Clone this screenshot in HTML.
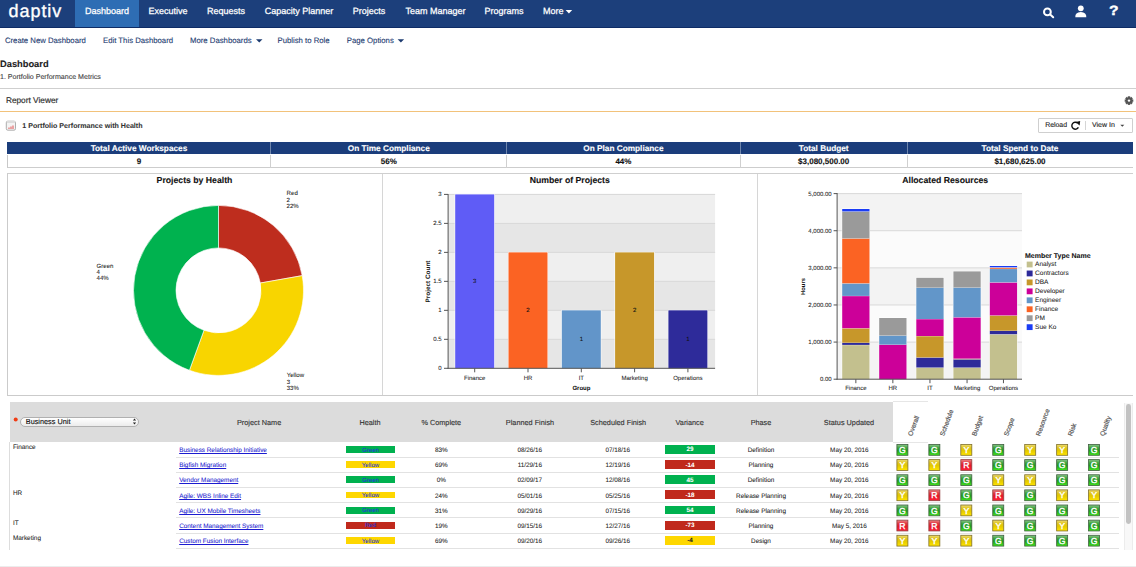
<!DOCTYPE html>
<html><head><meta charset="utf-8"><title>Dashboard</title>
<style>
html,body{margin:0;padding:0;width:1136px;height:567px;overflow:hidden;background:#fff;}
body{position:relative;font-family:"Liberation Sans", sans-serif;}
.t{position:absolute;white-space:nowrap;font-family:"Liberation Sans", sans-serif;text-rendering:geometricPrecision;}
svg text{text-rendering:geometricPrecision;}
svg.full{position:absolute;left:0;top:0;}
</style></head><body>

<div style="position:absolute;left:0.00px;top:0.00px;width:1136.00px;height:27.00px;background:#1c3f7b;"></div>
<div style="position:absolute;left:0.00px;top:27.00px;width:1136.00px;height:1.00px;background:#0e2c66;"></div>
<div style="position:absolute;left:75.00px;top:0.00px;width:64.00px;height:26.60px;background:#2e6db4;"></div>
<div style="position:absolute;left:0.00px;top:88.00px;width:1136.00px;height:1.00px;background:#cfcfcf;"></div>
<div style="position:absolute;left:0.00px;top:111.00px;width:1136.00px;height:1.00px;background:#f2c27a;"></div>
<div style="position:absolute;left:1038.20px;top:118.00px;width:94.50px;height:14.60px;background:#fff;border:1px solid #cfcfcf;box-sizing:border-box;border-radius:1px;"></div>
<div style="position:absolute;left:1085.30px;top:121.00px;width:0.80px;height:9.00px;background:#d5d5d5;"></div>
<div style="position:absolute;left:7.00px;top:141.60px;width:1125.70px;height:12.90px;background:#1b3d7b;"></div>
<div style="position:absolute;left:7.00px;top:154.50px;width:1126.00px;height:13.40px;background:#fff;border-left:1px solid #c8c8c8;border-bottom:1.4px solid #cdcdcd;box-sizing:border-box;"></div>
<div style="position:absolute;left:270.40px;top:141.60px;width:1.00px;height:12.90px;background:#6f86ad;"></div>
<div style="position:absolute;left:270.40px;top:154.50px;width:1.00px;height:13.00px;background:#d0d0d0;"></div>
<div style="position:absolute;left:506.20px;top:141.60px;width:1.00px;height:12.90px;background:#6f86ad;"></div>
<div style="position:absolute;left:506.20px;top:154.50px;width:1.00px;height:13.00px;background:#d0d0d0;"></div>
<div style="position:absolute;left:739.60px;top:141.60px;width:1.00px;height:12.90px;background:#6f86ad;"></div>
<div style="position:absolute;left:739.60px;top:154.50px;width:1.00px;height:13.00px;background:#d0d0d0;"></div>
<div style="position:absolute;left:906.80px;top:141.60px;width:1.00px;height:12.90px;background:#6f86ad;"></div>
<div style="position:absolute;left:906.80px;top:154.50px;width:1.00px;height:13.00px;background:#d0d0d0;"></div>
<div style="position:absolute;left:7.00px;top:173.20px;width:1126.00px;height:222.40px;background:#fff;border-left:1px solid #cbcbcb;border-bottom:1px solid #cbcbcb;border-top:1.6px solid #cfcfcf;box-sizing:border-box;"></div>
<div style="position:absolute;left:382.20px;top:174.00px;width:1.00px;height:221.00px;background:#d6d6d6;"></div>
<div style="position:absolute;left:757.30px;top:174.00px;width:1.00px;height:221.00px;background:#d6d6d6;"></div>
<div style="position:absolute;left:9.70px;top:402.00px;width:883.30px;height:39.60px;background:#dcdcdc;"></div>
<div style="position:absolute;left:893.00px;top:401.30px;width:35.00px;height:0.80px;background:#e6e6e6;"></div>
<div style="position:absolute;left:893.00px;top:441.90px;width:35.00px;height:0.80px;background:#e6e6e6;"></div>
<div style="position:absolute;left:9.20px;top:441.60px;width:0.80px;height:108.60px;background:#dddddd;"></div>
<div style="position:absolute;left:20.20px;top:416.80px;width:119.20px;height:9.80px;background:linear-gradient(#ffffff,#ececec);border:0.8px solid #b0b0b0;box-sizing:border-box;border-radius:5px;"></div>
<div style="position:absolute;left:1123.50px;top:403.00px;width:9.80px;height:146.70px;background:#f8f8f8;border-left:0.8px solid #ececec;border-right:0.8px solid #ececec;box-sizing:border-box;"></div>
<div style="position:absolute;left:1126.30px;top:403.70px;width:4.80px;height:119.90px;background:#c2c2c2;border-radius:2.4px;"></div>
<div style="position:absolute;left:0.00px;top:566.00px;width:1136.00px;height:1.00px;background:#ececec;"></div>
<div style="position:absolute;left:345.80px;top:446.15px;width:49.40px;height:6.90px;background:#00b14f;"></div>
<div style="position:absolute;left:665.00px;top:445.00px;width:50.00px;height:8.90px;background:#00b14f;"></div>
<div style="position:absolute;left:176.00px;top:456.90px;width:943.00px;height:0.80px;background:#e2e2e2;"></div>
<div style="position:absolute;left:345.80px;top:461.28px;width:49.40px;height:6.90px;background:#fed700;"></div>
<div style="position:absolute;left:665.00px;top:460.13px;width:50.00px;height:8.90px;background:#c0291c;"></div>
<div style="position:absolute;left:176.00px;top:472.03px;width:943.00px;height:0.80px;background:#e2e2e2;"></div>
<div style="position:absolute;left:345.80px;top:476.41px;width:49.40px;height:6.90px;background:#00b14f;"></div>
<div style="position:absolute;left:665.00px;top:475.26px;width:50.00px;height:8.90px;background:#00b14f;"></div>
<div style="position:absolute;left:176.00px;top:487.16px;width:943.00px;height:0.80px;background:#e2e2e2;"></div>
<div style="position:absolute;left:345.80px;top:491.54px;width:49.40px;height:6.90px;background:#fed700;"></div>
<div style="position:absolute;left:665.00px;top:490.39px;width:50.00px;height:8.90px;background:#c0291c;"></div>
<div style="position:absolute;left:176.00px;top:502.29px;width:943.00px;height:0.80px;background:#e2e2e2;"></div>
<div style="position:absolute;left:345.80px;top:506.67px;width:49.40px;height:6.90px;background:#00b14f;"></div>
<div style="position:absolute;left:665.00px;top:505.52px;width:50.00px;height:8.90px;background:#00b14f;"></div>
<div style="position:absolute;left:176.00px;top:517.42px;width:943.00px;height:0.80px;background:#e2e2e2;"></div>
<div style="position:absolute;left:345.80px;top:521.80px;width:49.40px;height:6.90px;background:#c0291c;"></div>
<div style="position:absolute;left:665.00px;top:520.65px;width:50.00px;height:8.90px;background:#c0291c;"></div>
<div style="position:absolute;left:176.00px;top:532.55px;width:943.00px;height:0.80px;background:#e2e2e2;"></div>
<div style="position:absolute;left:345.80px;top:536.93px;width:49.40px;height:6.90px;background:#fed700;"></div>
<div style="position:absolute;left:665.00px;top:535.78px;width:50.00px;height:8.90px;background:#fed700;"></div>
<div style="position:absolute;left:176.00px;top:547.68px;width:943.00px;height:0.80px;background:#e2e2e2;"></div>
<svg class="full" width="1136" height="567" viewBox="0 0 1136 567"><defs><linearGradient id="gG" x1="0" y1="0" x2="0" y2="1"><stop offset="0" stop-color="#8cc88c"/><stop offset="0.3" stop-color="#3fa43f"/><stop offset="0.55" stop-color="#1f9c1f"/><stop offset="1" stop-color="#45e31f"/></linearGradient><linearGradient id="gY" x1="0" y1="0" x2="0" y2="1"><stop offset="0" stop-color="#eedd77"/><stop offset="0.3" stop-color="#dfc520"/><stop offset="0.55" stop-color="#e2c800"/><stop offset="1" stop-color="#ffe400"/></linearGradient><linearGradient id="gR" x1="0" y1="0" x2="0" y2="1"><stop offset="0" stop-color="#ee8888"/><stop offset="0.3" stop-color="#e03a44"/><stop offset="0.55" stop-color="#e41a2a"/><stop offset="1" stop-color="#ff2036"/></linearGradient></defs><path d="M565.6 10.0 L572.2 10.0 L568.9 13.4 Z" fill="#fff"/>
<circle cx="1047.4" cy="11.9" r="3.4" fill="none" stroke="#fff" stroke-width="2"/><path d="M1050.2 14.6 L1053.2 17.3" stroke="#fff" stroke-width="2" stroke-linecap="round"/>
<circle cx="1080.8" cy="8.3" r="2.9" fill="#fff"/><path d="M1075.3 17.2 Q1075 12.3 1080.8 12 Q1086.6 12.3 1086.3 17.2 Z" fill="#fff"/>
<path d="M256 39.3 L262.5 39.3 L259.25 42.5 Z" fill="#1d3b70"/>
<path d="M397.6 39.3 L404.1 39.3 L400.85 42.5 Z" fill="#1d3b70"/>
<rect x="1127.80" y="96.30" width="2.4" height="2.4" fill="#555" transform="rotate(0 1129 100.6)"/><rect x="1127.80" y="96.30" width="2.4" height="2.4" fill="#555" transform="rotate(45 1129 100.6)"/><rect x="1127.80" y="96.30" width="2.4" height="2.4" fill="#555" transform="rotate(90 1129 100.6)"/><rect x="1127.80" y="96.30" width="2.4" height="2.4" fill="#555" transform="rotate(135 1129 100.6)"/><rect x="1127.80" y="96.30" width="2.4" height="2.4" fill="#555" transform="rotate(180 1129 100.6)"/><rect x="1127.80" y="96.30" width="2.4" height="2.4" fill="#555" transform="rotate(225 1129 100.6)"/><rect x="1127.80" y="96.30" width="2.4" height="2.4" fill="#555" transform="rotate(270 1129 100.6)"/><rect x="1127.80" y="96.30" width="2.4" height="2.4" fill="#555" transform="rotate(315 1129 100.6)"/><circle cx="1129" cy="100.6" r="3.1" fill="#555"/><circle cx="1129" cy="100.6" r="1.2" fill="#fff"/>
<rect x="6.3" y="121.2" width="9.2" height="9" rx="1.5" fill="#f4f4f4" stroke="#9a9a9a" stroke-width="0.8"/><rect x="7" y="121" width="8" height="2" fill="#ddd"/><path d="M9 129 L9 127.5 M11 129 L11 126.5 M13 129 L13 125.5" stroke="#e05050" stroke-width="1"/>
<path d="M1077.6 123.0 A3.5 3.5 0 1 0 1078.4 127.4" fill="none" stroke="#111" stroke-width="1.4"/><path d="M1075.6 121.9 L1080.2 121.0 L1079.6 125.4 Z" fill="#111"/>
<path d="M1120.3 124.8 L1124.3 124.8 L1122.3 126.8 Z" fill="#444"/>
<path d="M218.50 205.40 A85 85 0 0 1 302.21 275.64 L260.35 283.02 A42.5 42.5 0 0 0 218.50 247.90 Z" fill="#be2d1e" stroke="#fff" stroke-width="0.6"/>
<path d="M302.21 275.64 A85 85 0 0 1 189.43 370.27 L203.96 330.34 A42.5 42.5 0 0 0 260.35 283.02 Z" fill="#f8d500" stroke="#fff" stroke-width="0.6"/>
<path d="M189.43 370.27 A85 85 0 0 1 218.50 205.40 L218.50 247.90 A42.5 42.5 0 0 0 203.96 330.34 Z" fill="#00b24f" stroke="#fff" stroke-width="0.6"/>
<rect x="448.1" y="339.32" width="267.00" height="28.98" fill="#e6e6e6"/>
<rect x="448.1" y="310.33" width="267.00" height="28.98" fill="#efefef"/>
<rect x="448.1" y="281.35" width="267.00" height="28.98" fill="#e6e6e6"/>
<rect x="448.1" y="252.37" width="267.00" height="28.98" fill="#efefef"/>
<rect x="448.1" y="223.38" width="267.00" height="28.98" fill="#e6e6e6"/>
<rect x="448.1" y="194.40" width="267.00" height="28.98" fill="#efefef"/>
<rect x="448.1" y="338.82" width="267.00" height="1" fill="#d8d8d8"/>
<rect x="448.1" y="309.83" width="267.00" height="1" fill="#d8d8d8"/>
<rect x="448.1" y="280.85" width="267.00" height="1" fill="#d8d8d8"/>
<rect x="448.1" y="251.87" width="267.00" height="1" fill="#d8d8d8"/>
<rect x="448.1" y="222.88" width="267.00" height="1" fill="#d8d8d8"/>
<rect x="448.1" y="193.90" width="267.00" height="1" fill="#d8d8d8"/>
<rect x="454.70" y="193.90" width="40" height="174.40" fill="#fff"/>
<rect x="455.20" y="194.40" width="39" height="173.90" fill="#5f5cf6"/>
<rect x="474.20" y="368.3" width="1" height="4" fill="#555"/>
<rect x="508.00" y="251.87" width="40" height="116.43" fill="#fff"/>
<rect x="508.50" y="252.37" width="39" height="115.93" fill="#fb6323"/>
<rect x="527.50" y="368.3" width="1" height="4" fill="#555"/>
<rect x="561.30" y="309.83" width="40" height="58.47" fill="#fff"/>
<rect x="561.80" y="310.33" width="39" height="57.97" fill="#6295c9"/>
<rect x="580.80" y="368.3" width="1" height="4" fill="#555"/>
<rect x="614.60" y="251.87" width="40" height="116.43" fill="#fff"/>
<rect x="615.10" y="252.37" width="39" height="115.93" fill="#c7972a"/>
<rect x="634.10" y="368.3" width="1" height="4" fill="#555"/>
<rect x="667.90" y="309.83" width="40" height="58.47" fill="#fff"/>
<rect x="668.40" y="310.33" width="39" height="57.97" fill="#2e2b9a"/>
<rect x="687.40" y="368.3" width="1" height="4" fill="#555"/>
<rect x="447.6" y="194" width="1" height="174.80" fill="#555"/>
<rect x="447.6" y="367.80" width="267.50" height="1" fill="#555"/>
<rect x="444" y="367.80" width="4" height="1" fill="#555"/>
<rect x="444" y="338.82" width="4" height="1" fill="#555"/>
<rect x="444" y="309.83" width="4" height="1" fill="#555"/>
<rect x="444" y="280.85" width="4" height="1" fill="#555"/>
<rect x="444" y="251.87" width="4" height="1" fill="#555"/>
<rect x="444" y="222.88" width="4" height="1" fill="#555"/>
<rect x="444" y="193.90" width="4" height="1" fill="#555"/>
<rect x="837.1" y="342.08" width="184.90" height="37.12" fill="#f4f4f4"/>
<rect x="837.1" y="304.96" width="184.90" height="37.12" fill="#fbfbfb"/>
<rect x="837.1" y="267.84" width="184.90" height="37.12" fill="#f3f3f3"/>
<rect x="837.1" y="230.72" width="184.90" height="37.12" fill="#fbfbfb"/>
<rect x="837.1" y="193.60" width="184.90" height="37.12" fill="#f3f3f3"/>
<rect x="837.1" y="341.58" width="184.90" height="1" fill="#d9d9d9"/>
<rect x="837.1" y="304.46" width="184.90" height="1" fill="#d9d9d9"/>
<rect x="837.1" y="267.34" width="184.90" height="1" fill="#d9d9d9"/>
<rect x="837.1" y="230.22" width="184.90" height="1" fill="#d9d9d9"/>
<rect x="837.1" y="193.10" width="184.90" height="1" fill="#d9d9d9"/>
<rect x="841.70" y="208.50" width="28.3" height="170.70" fill="#fff"/>
<rect x="842.20" y="344.90" width="27.3" height="34.30" fill="#c3c08e"/>
<rect x="842.20" y="344.60" width="27.3" height="0.6" fill="#fff" fill-opacity="0.8"/>
<rect x="842.20" y="342.70" width="27.3" height="2.20" fill="#2d2a99"/>
<rect x="842.20" y="342.40" width="27.3" height="0.6" fill="#fff" fill-opacity="0.8"/>
<rect x="842.20" y="328.20" width="27.3" height="14.50" fill="#c7972a"/>
<rect x="842.20" y="327.90" width="27.3" height="0.6" fill="#fff" fill-opacity="0.8"/>
<rect x="842.20" y="295.90" width="27.3" height="32.30" fill="#cc0099"/>
<rect x="842.20" y="295.60" width="27.3" height="0.6" fill="#fff" fill-opacity="0.8"/>
<rect x="842.20" y="283.30" width="27.3" height="12.60" fill="#6296c9"/>
<rect x="842.20" y="283.00" width="27.3" height="0.6" fill="#fff" fill-opacity="0.8"/>
<rect x="842.20" y="238.40" width="27.3" height="44.90" fill="#fb6323"/>
<rect x="842.20" y="238.10" width="27.3" height="0.6" fill="#fff" fill-opacity="0.8"/>
<rect x="842.20" y="211.40" width="27.3" height="27.00" fill="#9a9a9a"/>
<rect x="842.20" y="211.10" width="27.3" height="0.6" fill="#fff" fill-opacity="0.8"/>
<rect x="842.20" y="209.00" width="27.3" height="2.40" fill="#1a3cf5"/>
<rect x="855.35" y="379.2" width="1" height="4" fill="#555"/>
<rect x="878.70" y="317.50" width="28.3" height="61.70" fill="#fff"/>
<rect x="879.20" y="344.60" width="27.3" height="34.60" fill="#cc0099"/>
<rect x="879.20" y="344.30" width="27.3" height="0.6" fill="#fff" fill-opacity="0.8"/>
<rect x="879.20" y="335.50" width="27.3" height="9.10" fill="#6296c9"/>
<rect x="879.20" y="335.20" width="27.3" height="0.6" fill="#fff" fill-opacity="0.8"/>
<rect x="879.20" y="318.00" width="27.3" height="17.50" fill="#9a9a9a"/>
<rect x="892.35" y="379.2" width="1" height="4" fill="#555"/>
<rect x="915.80" y="277.30" width="28.3" height="101.90" fill="#fff"/>
<rect x="916.30" y="367.50" width="27.3" height="11.70" fill="#c3c08e"/>
<rect x="916.30" y="367.20" width="27.3" height="0.6" fill="#fff" fill-opacity="0.8"/>
<rect x="916.30" y="357.40" width="27.3" height="10.10" fill="#2d2a99"/>
<rect x="916.30" y="357.10" width="27.3" height="0.6" fill="#fff" fill-opacity="0.8"/>
<rect x="916.30" y="336.00" width="27.3" height="21.40" fill="#c7972a"/>
<rect x="916.30" y="335.70" width="27.3" height="0.6" fill="#fff" fill-opacity="0.8"/>
<rect x="916.30" y="319.00" width="27.3" height="17.00" fill="#cc0099"/>
<rect x="916.30" y="318.70" width="27.3" height="0.6" fill="#fff" fill-opacity="0.8"/>
<rect x="916.30" y="287.60" width="27.3" height="31.40" fill="#6296c9"/>
<rect x="916.30" y="287.30" width="27.3" height="0.6" fill="#fff" fill-opacity="0.8"/>
<rect x="916.30" y="277.80" width="27.3" height="9.80" fill="#9a9a9a"/>
<rect x="929.45" y="379.2" width="1" height="4" fill="#555"/>
<rect x="952.90" y="270.90" width="28.3" height="108.30" fill="#fff"/>
<rect x="953.40" y="367.50" width="27.3" height="11.70" fill="#c3c08e"/>
<rect x="953.40" y="367.20" width="27.3" height="0.6" fill="#fff" fill-opacity="0.8"/>
<rect x="953.40" y="359.20" width="27.3" height="8.30" fill="#2d2a99"/>
<rect x="953.40" y="358.90" width="27.3" height="0.6" fill="#fff" fill-opacity="0.8"/>
<rect x="953.40" y="358.60" width="27.3" height="0.60" fill="#c7972a"/>
<rect x="953.40" y="358.30" width="27.3" height="0.6" fill="#fff" fill-opacity="0.8"/>
<rect x="953.40" y="317.20" width="27.3" height="41.40" fill="#cc0099"/>
<rect x="953.40" y="316.90" width="27.3" height="0.6" fill="#fff" fill-opacity="0.8"/>
<rect x="953.40" y="287.50" width="27.3" height="29.70" fill="#6296c9"/>
<rect x="953.40" y="287.20" width="27.3" height="0.6" fill="#fff" fill-opacity="0.8"/>
<rect x="953.40" y="271.40" width="27.3" height="16.10" fill="#9a9a9a"/>
<rect x="966.55" y="379.2" width="1" height="4" fill="#555"/>
<rect x="989.30" y="265.50" width="28.3" height="113.70" fill="#fff"/>
<rect x="989.80" y="334.20" width="27.3" height="45.00" fill="#c3c08e"/>
<rect x="989.80" y="333.90" width="27.3" height="0.6" fill="#fff" fill-opacity="0.8"/>
<rect x="989.80" y="330.70" width="27.3" height="3.50" fill="#2d2a99"/>
<rect x="989.80" y="330.40" width="27.3" height="0.6" fill="#fff" fill-opacity="0.8"/>
<rect x="989.80" y="315.40" width="27.3" height="15.30" fill="#c7972a"/>
<rect x="989.80" y="315.10" width="27.3" height="0.6" fill="#fff" fill-opacity="0.8"/>
<rect x="989.80" y="282.30" width="27.3" height="33.10" fill="#cc0099"/>
<rect x="989.80" y="282.00" width="27.3" height="0.6" fill="#fff" fill-opacity="0.8"/>
<rect x="989.80" y="268.80" width="27.3" height="13.50" fill="#6296c9"/>
<rect x="989.80" y="268.50" width="27.3" height="0.6" fill="#fff" fill-opacity="0.8"/>
<rect x="989.80" y="267.60" width="27.3" height="1.20" fill="#fb6323"/>
<rect x="989.80" y="267.30" width="27.3" height="0.6" fill="#fff" fill-opacity="0.8"/>
<rect x="989.80" y="267.30" width="27.3" height="0.30" fill="#9a9a9a"/>
<rect x="989.80" y="267.00" width="27.3" height="0.6" fill="#fff" fill-opacity="0.8"/>
<rect x="989.80" y="266.00" width="27.3" height="1.30" fill="#1a3cf5"/>
<rect x="1002.95" y="379.2" width="1" height="4" fill="#555"/>
<rect x="836.6" y="193" width="1" height="186.70" fill="#555"/>
<rect x="836.6" y="378.70" width="185.40" height="1" fill="#555"/>
<rect x="833.6" y="378.70" width="3.5" height="1" fill="#555"/>
<rect x="833.6" y="341.58" width="3.5" height="1" fill="#555"/>
<rect x="833.6" y="304.46" width="3.5" height="1" fill="#555"/>
<rect x="833.6" y="267.34" width="3.5" height="1" fill="#555"/>
<rect x="833.6" y="230.22" width="3.5" height="1" fill="#555"/>
<rect x="833.6" y="193.10" width="3.5" height="1" fill="#555"/>
<rect x="1026.7" y="261.60" width="5.9" height="5.8" fill="#c3c08e"/>
<rect x="1026.7" y="270.55" width="5.9" height="5.8" fill="#2d2a99"/>
<rect x="1026.7" y="279.50" width="5.9" height="5.8" fill="#c7972a"/>
<rect x="1026.7" y="288.45" width="5.9" height="5.8" fill="#cc0099"/>
<rect x="1026.7" y="297.40" width="5.9" height="5.8" fill="#6296c9"/>
<rect x="1026.7" y="306.35" width="5.9" height="5.8" fill="#fb6323"/>
<rect x="1026.7" y="315.30" width="5.9" height="5.8" fill="#9a9a9a"/>
<rect x="1026.7" y="324.25" width="5.9" height="5.8" fill="#1a3cf5"/>
<circle cx="15.7" cy="419.5" r="2" fill="#f03c14"/>
<path d="M132.9 420.4 L136.1 420.4 L134.5 418.4 Z M132.9 422.6 L136.1 422.6 L134.5 424.6 Z" fill="#222"/>
<text x="912.10" y="436.4" transform="rotate(-70 912.10 436.4)" font-family="Liberation Sans" font-size="6.6" fill="#555" stroke="#555" stroke-width="0.2">Overall</text>
<text x="944.10" y="436.4" transform="rotate(-70 944.10 436.4)" font-family="Liberation Sans" font-size="6.6" fill="#555" stroke="#555" stroke-width="0.2">Schedule</text>
<text x="976.10" y="436.4" transform="rotate(-70 976.10 436.4)" font-family="Liberation Sans" font-size="6.6" fill="#555" stroke="#555" stroke-width="0.2">Budget</text>
<text x="1008.10" y="436.4" transform="rotate(-70 1008.10 436.4)" font-family="Liberation Sans" font-size="6.6" fill="#555" stroke="#555" stroke-width="0.2">Scope</text>
<text x="1040.10" y="436.4" transform="rotate(-70 1040.10 436.4)" font-family="Liberation Sans" font-size="6.6" fill="#555" stroke="#555" stroke-width="0.2">Resource</text>
<text x="1072.10" y="436.4" transform="rotate(-70 1072.10 436.4)" font-family="Liberation Sans" font-size="6.6" fill="#555" stroke="#555" stroke-width="0.2">Risk</text>
<text x="1104.10" y="436.4" transform="rotate(-70 1104.10 436.4)" font-family="Liberation Sans" font-size="6.6" fill="#555" stroke="#555" stroke-width="0.2">Quality</text>
<rect x="896.90" y="444.50" width="11" height="10.8" fill="url(#gG)" stroke="#3f5f3f" stroke-width="0.8"/>
<text x="902.40" y="453.00" text-anchor="middle" font-family="Liberation Sans" font-weight="400" font-size="8.6" fill="#fff" stroke="#fff" stroke-width="0.35">G</text>
<rect x="928.85" y="444.50" width="11" height="10.8" fill="url(#gG)" stroke="#3f5f3f" stroke-width="0.8"/>
<text x="934.35" y="453.00" text-anchor="middle" font-family="Liberation Sans" font-weight="400" font-size="8.6" fill="#fff" stroke="#fff" stroke-width="0.35">G</text>
<rect x="960.80" y="444.50" width="11" height="10.8" fill="url(#gY)" stroke="#80702a" stroke-width="0.8"/>
<text x="966.30" y="453.00" text-anchor="middle" font-family="Liberation Sans" font-weight="400" font-size="8.6" fill="#fff" stroke="#fff" stroke-width="0.35">Y</text>
<rect x="992.75" y="444.50" width="11" height="10.8" fill="url(#gG)" stroke="#3f5f3f" stroke-width="0.8"/>
<text x="998.25" y="453.00" text-anchor="middle" font-family="Liberation Sans" font-weight="400" font-size="8.6" fill="#fff" stroke="#fff" stroke-width="0.35">G</text>
<rect x="1024.70" y="444.50" width="11" height="10.8" fill="url(#gY)" stroke="#80702a" stroke-width="0.8"/>
<text x="1030.20" y="453.00" text-anchor="middle" font-family="Liberation Sans" font-weight="400" font-size="8.6" fill="#fff" stroke="#fff" stroke-width="0.35">Y</text>
<rect x="1056.65" y="444.50" width="11" height="10.8" fill="url(#gY)" stroke="#80702a" stroke-width="0.8"/>
<text x="1062.15" y="453.00" text-anchor="middle" font-family="Liberation Sans" font-weight="400" font-size="8.6" fill="#fff" stroke="#fff" stroke-width="0.35">Y</text>
<rect x="1088.60" y="444.50" width="11" height="10.8" fill="url(#gG)" stroke="#3f5f3f" stroke-width="0.8"/>
<text x="1094.10" y="453.00" text-anchor="middle" font-family="Liberation Sans" font-weight="400" font-size="8.6" fill="#fff" stroke="#fff" stroke-width="0.35">G</text>
<rect x="896.90" y="459.63" width="11" height="10.8" fill="url(#gY)" stroke="#80702a" stroke-width="0.8"/>
<text x="902.40" y="468.13" text-anchor="middle" font-family="Liberation Sans" font-weight="400" font-size="8.6" fill="#fff" stroke="#fff" stroke-width="0.35">Y</text>
<rect x="928.85" y="459.63" width="11" height="10.8" fill="url(#gY)" stroke="#80702a" stroke-width="0.8"/>
<text x="934.35" y="468.13" text-anchor="middle" font-family="Liberation Sans" font-weight="400" font-size="8.6" fill="#fff" stroke="#fff" stroke-width="0.35">Y</text>
<rect x="960.80" y="459.63" width="11" height="10.8" fill="url(#gR)" stroke="#904040" stroke-width="0.8"/>
<text x="966.30" y="468.13" text-anchor="middle" font-family="Liberation Sans" font-weight="400" font-size="8.6" fill="#fff" stroke="#fff" stroke-width="0.35">R</text>
<rect x="992.75" y="459.63" width="11" height="10.8" fill="url(#gG)" stroke="#3f5f3f" stroke-width="0.8"/>
<text x="998.25" y="468.13" text-anchor="middle" font-family="Liberation Sans" font-weight="400" font-size="8.6" fill="#fff" stroke="#fff" stroke-width="0.35">G</text>
<rect x="1024.70" y="459.63" width="11" height="10.8" fill="url(#gG)" stroke="#3f5f3f" stroke-width="0.8"/>
<text x="1030.20" y="468.13" text-anchor="middle" font-family="Liberation Sans" font-weight="400" font-size="8.6" fill="#fff" stroke="#fff" stroke-width="0.35">G</text>
<rect x="1056.65" y="459.63" width="11" height="10.8" fill="url(#gG)" stroke="#3f5f3f" stroke-width="0.8"/>
<text x="1062.15" y="468.13" text-anchor="middle" font-family="Liberation Sans" font-weight="400" font-size="8.6" fill="#fff" stroke="#fff" stroke-width="0.35">G</text>
<rect x="1088.60" y="459.63" width="11" height="10.8" fill="url(#gG)" stroke="#3f5f3f" stroke-width="0.8"/>
<text x="1094.10" y="468.13" text-anchor="middle" font-family="Liberation Sans" font-weight="400" font-size="8.6" fill="#fff" stroke="#fff" stroke-width="0.35">G</text>
<rect x="896.90" y="474.76" width="11" height="10.8" fill="url(#gG)" stroke="#3f5f3f" stroke-width="0.8"/>
<text x="902.40" y="483.26" text-anchor="middle" font-family="Liberation Sans" font-weight="400" font-size="8.6" fill="#fff" stroke="#fff" stroke-width="0.35">G</text>
<rect x="928.85" y="474.76" width="11" height="10.8" fill="url(#gG)" stroke="#3f5f3f" stroke-width="0.8"/>
<text x="934.35" y="483.26" text-anchor="middle" font-family="Liberation Sans" font-weight="400" font-size="8.6" fill="#fff" stroke="#fff" stroke-width="0.35">G</text>
<rect x="960.80" y="474.76" width="11" height="10.8" fill="url(#gG)" stroke="#3f5f3f" stroke-width="0.8"/>
<text x="966.30" y="483.26" text-anchor="middle" font-family="Liberation Sans" font-weight="400" font-size="8.6" fill="#fff" stroke="#fff" stroke-width="0.35">G</text>
<rect x="992.75" y="474.76" width="11" height="10.8" fill="url(#gY)" stroke="#80702a" stroke-width="0.8"/>
<text x="998.25" y="483.26" text-anchor="middle" font-family="Liberation Sans" font-weight="400" font-size="8.6" fill="#fff" stroke="#fff" stroke-width="0.35">Y</text>
<rect x="1024.70" y="474.76" width="11" height="10.8" fill="url(#gY)" stroke="#80702a" stroke-width="0.8"/>
<text x="1030.20" y="483.26" text-anchor="middle" font-family="Liberation Sans" font-weight="400" font-size="8.6" fill="#fff" stroke="#fff" stroke-width="0.35">Y</text>
<rect x="1056.65" y="474.76" width="11" height="10.8" fill="url(#gG)" stroke="#3f5f3f" stroke-width="0.8"/>
<text x="1062.15" y="483.26" text-anchor="middle" font-family="Liberation Sans" font-weight="400" font-size="8.6" fill="#fff" stroke="#fff" stroke-width="0.35">G</text>
<rect x="1088.60" y="474.76" width="11" height="10.8" fill="url(#gG)" stroke="#3f5f3f" stroke-width="0.8"/>
<text x="1094.10" y="483.26" text-anchor="middle" font-family="Liberation Sans" font-weight="400" font-size="8.6" fill="#fff" stroke="#fff" stroke-width="0.35">G</text>
<rect x="896.90" y="489.89" width="11" height="10.8" fill="url(#gY)" stroke="#80702a" stroke-width="0.8"/>
<text x="902.40" y="498.39" text-anchor="middle" font-family="Liberation Sans" font-weight="400" font-size="8.6" fill="#fff" stroke="#fff" stroke-width="0.35">Y</text>
<rect x="928.85" y="489.89" width="11" height="10.8" fill="url(#gR)" stroke="#904040" stroke-width="0.8"/>
<text x="934.35" y="498.39" text-anchor="middle" font-family="Liberation Sans" font-weight="400" font-size="8.6" fill="#fff" stroke="#fff" stroke-width="0.35">R</text>
<rect x="960.80" y="489.89" width="11" height="10.8" fill="url(#gG)" stroke="#3f5f3f" stroke-width="0.8"/>
<text x="966.30" y="498.39" text-anchor="middle" font-family="Liberation Sans" font-weight="400" font-size="8.6" fill="#fff" stroke="#fff" stroke-width="0.35">G</text>
<rect x="992.75" y="489.89" width="11" height="10.8" fill="url(#gR)" stroke="#904040" stroke-width="0.8"/>
<text x="998.25" y="498.39" text-anchor="middle" font-family="Liberation Sans" font-weight="400" font-size="8.6" fill="#fff" stroke="#fff" stroke-width="0.35">R</text>
<rect x="1024.70" y="489.89" width="11" height="10.8" fill="url(#gG)" stroke="#3f5f3f" stroke-width="0.8"/>
<text x="1030.20" y="498.39" text-anchor="middle" font-family="Liberation Sans" font-weight="400" font-size="8.6" fill="#fff" stroke="#fff" stroke-width="0.35">G</text>
<rect x="1056.65" y="489.89" width="11" height="10.8" fill="url(#gY)" stroke="#80702a" stroke-width="0.8"/>
<text x="1062.15" y="498.39" text-anchor="middle" font-family="Liberation Sans" font-weight="400" font-size="8.6" fill="#fff" stroke="#fff" stroke-width="0.35">Y</text>
<rect x="1088.60" y="489.89" width="11" height="10.8" fill="url(#gY)" stroke="#80702a" stroke-width="0.8"/>
<text x="1094.10" y="498.39" text-anchor="middle" font-family="Liberation Sans" font-weight="400" font-size="8.6" fill="#fff" stroke="#fff" stroke-width="0.35">Y</text>
<rect x="896.90" y="505.02" width="11" height="10.8" fill="url(#gG)" stroke="#3f5f3f" stroke-width="0.8"/>
<text x="902.40" y="513.52" text-anchor="middle" font-family="Liberation Sans" font-weight="400" font-size="8.6" fill="#fff" stroke="#fff" stroke-width="0.35">G</text>
<rect x="928.85" y="505.02" width="11" height="10.8" fill="url(#gG)" stroke="#3f5f3f" stroke-width="0.8"/>
<text x="934.35" y="513.52" text-anchor="middle" font-family="Liberation Sans" font-weight="400" font-size="8.6" fill="#fff" stroke="#fff" stroke-width="0.35">G</text>
<rect x="960.80" y="505.02" width="11" height="10.8" fill="url(#gY)" stroke="#80702a" stroke-width="0.8"/>
<text x="966.30" y="513.52" text-anchor="middle" font-family="Liberation Sans" font-weight="400" font-size="8.6" fill="#fff" stroke="#fff" stroke-width="0.35">Y</text>
<rect x="992.75" y="505.02" width="11" height="10.8" fill="url(#gG)" stroke="#3f5f3f" stroke-width="0.8"/>
<text x="998.25" y="513.52" text-anchor="middle" font-family="Liberation Sans" font-weight="400" font-size="8.6" fill="#fff" stroke="#fff" stroke-width="0.35">G</text>
<rect x="1024.70" y="505.02" width="11" height="10.8" fill="url(#gG)" stroke="#3f5f3f" stroke-width="0.8"/>
<text x="1030.20" y="513.52" text-anchor="middle" font-family="Liberation Sans" font-weight="400" font-size="8.6" fill="#fff" stroke="#fff" stroke-width="0.35">G</text>
<rect x="1056.65" y="505.02" width="11" height="10.8" fill="url(#gG)" stroke="#3f5f3f" stroke-width="0.8"/>
<text x="1062.15" y="513.52" text-anchor="middle" font-family="Liberation Sans" font-weight="400" font-size="8.6" fill="#fff" stroke="#fff" stroke-width="0.35">G</text>
<rect x="1088.60" y="505.02" width="11" height="10.8" fill="url(#gG)" stroke="#3f5f3f" stroke-width="0.8"/>
<text x="1094.10" y="513.52" text-anchor="middle" font-family="Liberation Sans" font-weight="400" font-size="8.6" fill="#fff" stroke="#fff" stroke-width="0.35">G</text>
<rect x="896.90" y="520.15" width="11" height="10.8" fill="url(#gR)" stroke="#904040" stroke-width="0.8"/>
<text x="902.40" y="528.65" text-anchor="middle" font-family="Liberation Sans" font-weight="400" font-size="8.6" fill="#fff" stroke="#fff" stroke-width="0.35">R</text>
<rect x="928.85" y="520.15" width="11" height="10.8" fill="url(#gR)" stroke="#904040" stroke-width="0.8"/>
<text x="934.35" y="528.65" text-anchor="middle" font-family="Liberation Sans" font-weight="400" font-size="8.6" fill="#fff" stroke="#fff" stroke-width="0.35">R</text>
<rect x="960.80" y="520.15" width="11" height="10.8" fill="url(#gG)" stroke="#3f5f3f" stroke-width="0.8"/>
<text x="966.30" y="528.65" text-anchor="middle" font-family="Liberation Sans" font-weight="400" font-size="8.6" fill="#fff" stroke="#fff" stroke-width="0.35">G</text>
<rect x="992.75" y="520.15" width="11" height="10.8" fill="url(#gY)" stroke="#80702a" stroke-width="0.8"/>
<text x="998.25" y="528.65" text-anchor="middle" font-family="Liberation Sans" font-weight="400" font-size="8.6" fill="#fff" stroke="#fff" stroke-width="0.35">Y</text>
<rect x="1024.70" y="520.15" width="11" height="10.8" fill="url(#gG)" stroke="#3f5f3f" stroke-width="0.8"/>
<text x="1030.20" y="528.65" text-anchor="middle" font-family="Liberation Sans" font-weight="400" font-size="8.6" fill="#fff" stroke="#fff" stroke-width="0.35">G</text>
<rect x="1056.65" y="520.15" width="11" height="10.8" fill="url(#gY)" stroke="#80702a" stroke-width="0.8"/>
<text x="1062.15" y="528.65" text-anchor="middle" font-family="Liberation Sans" font-weight="400" font-size="8.6" fill="#fff" stroke="#fff" stroke-width="0.35">Y</text>
<rect x="1088.60" y="520.15" width="11" height="10.8" fill="url(#gG)" stroke="#3f5f3f" stroke-width="0.8"/>
<text x="1094.10" y="528.65" text-anchor="middle" font-family="Liberation Sans" font-weight="400" font-size="8.6" fill="#fff" stroke="#fff" stroke-width="0.35">G</text>
<rect x="896.90" y="535.28" width="11" height="10.8" fill="url(#gY)" stroke="#80702a" stroke-width="0.8"/>
<text x="902.40" y="543.78" text-anchor="middle" font-family="Liberation Sans" font-weight="400" font-size="8.6" fill="#fff" stroke="#fff" stroke-width="0.35">Y</text>
<rect x="928.85" y="535.28" width="11" height="10.8" fill="url(#gY)" stroke="#80702a" stroke-width="0.8"/>
<text x="934.35" y="543.78" text-anchor="middle" font-family="Liberation Sans" font-weight="400" font-size="8.6" fill="#fff" stroke="#fff" stroke-width="0.35">Y</text>
<rect x="960.80" y="535.28" width="11" height="10.8" fill="url(#gY)" stroke="#80702a" stroke-width="0.8"/>
<text x="966.30" y="543.78" text-anchor="middle" font-family="Liberation Sans" font-weight="400" font-size="8.6" fill="#fff" stroke="#fff" stroke-width="0.35">Y</text>
<rect x="992.75" y="535.28" width="11" height="10.8" fill="url(#gG)" stroke="#3f5f3f" stroke-width="0.8"/>
<text x="998.25" y="543.78" text-anchor="middle" font-family="Liberation Sans" font-weight="400" font-size="8.6" fill="#fff" stroke="#fff" stroke-width="0.35">G</text>
<rect x="1024.70" y="535.28" width="11" height="10.8" fill="url(#gG)" stroke="#3f5f3f" stroke-width="0.8"/>
<text x="1030.20" y="543.78" text-anchor="middle" font-family="Liberation Sans" font-weight="400" font-size="8.6" fill="#fff" stroke="#fff" stroke-width="0.35">G</text>
<rect x="1056.65" y="535.28" width="11" height="10.8" fill="url(#gG)" stroke="#3f5f3f" stroke-width="0.8"/>
<text x="1062.15" y="543.78" text-anchor="middle" font-family="Liberation Sans" font-weight="400" font-size="8.6" fill="#fff" stroke="#fff" stroke-width="0.35">G</text>
<rect x="1088.60" y="535.28" width="11" height="10.8" fill="url(#gG)" stroke="#3f5f3f" stroke-width="0.8"/>
<text x="1094.10" y="543.78" text-anchor="middle" font-family="Liberation Sans" font-weight="400" font-size="8.6" fill="#fff" stroke="#fff" stroke-width="0.35">G</text></svg>
<div class="t" style="left:8.50px;top:2.16px;font-size:18px;line-height:18px;color:#fff;font-weight:400;letter-spacing:0.95px;-webkit-text-stroke:0.35px #fff;">daptiv</div>
<div class="t" style="left:85.00px;top:7.18px;font-size:9px;line-height:9px;color:#fff;font-weight:400;-webkit-text-stroke:0.25px #fff;">Dashboard</div>
<div class="t" style="left:148.60px;top:7.18px;font-size:9px;line-height:9px;color:#fff;font-weight:400;-webkit-text-stroke:0.25px #fff;">Executive</div>
<div class="t" style="left:207.00px;top:7.18px;font-size:9px;line-height:9px;color:#fff;font-weight:400;-webkit-text-stroke:0.25px #fff;">Requests</div>
<div class="t" style="left:264.80px;top:7.18px;font-size:9px;line-height:9px;color:#fff;font-weight:400;-webkit-text-stroke:0.25px #fff;">Capacity Planner</div>
<div class="t" style="left:352.80px;top:7.18px;font-size:9px;line-height:9px;color:#fff;font-weight:400;-webkit-text-stroke:0.25px #fff;">Projects</div>
<div class="t" style="left:405.40px;top:7.18px;font-size:9px;line-height:9px;color:#fff;font-weight:400;-webkit-text-stroke:0.25px #fff;">Team Manager</div>
<div class="t" style="left:484.60px;top:7.18px;font-size:9px;line-height:9px;color:#fff;font-weight:400;-webkit-text-stroke:0.25px #fff;">Programs</div>
<div class="t" style="left:543.00px;top:7.18px;font-size:9px;line-height:9px;color:#fff;font-weight:400;-webkit-text-stroke:0.25px #fff;">More</div>
<div class="t" style="left:1109.3px;top:3.8px;font-size:13.5px;line-height:14px;color:#fff;font-weight:700;transform:scaleX(1.15);transform-origin:left top;-webkit-text-stroke:0.4px #fff;">?</div>
<div class="t" style="left:4.90px;top:37.24px;font-size:7.75px;line-height:7.75px;color:#1d3b70;font-weight:400;-webkit-text-stroke:0.1px #1d3b70;">Create New Dashboard</div>
<div class="t" style="left:103.00px;top:37.24px;font-size:7.75px;line-height:7.75px;color:#1d3b70;font-weight:400;-webkit-text-stroke:0.1px #1d3b70;">Edit This Dashboard</div>
<div class="t" style="left:190.00px;top:37.24px;font-size:7.75px;line-height:7.75px;color:#1d3b70;font-weight:400;-webkit-text-stroke:0.1px #1d3b70;">More Dashboards</div>
<div class="t" style="left:277.50px;top:37.24px;font-size:7.75px;line-height:7.75px;color:#1d3b70;font-weight:400;-webkit-text-stroke:0.1px #1d3b70;">Publish to Role</div>
<div class="t" style="left:346.80px;top:37.24px;font-size:7.75px;line-height:7.75px;color:#1d3b70;font-weight:400;-webkit-text-stroke:0.1px #1d3b70;">Page Options</div>
<div class="t" style="left:0.00px;top:59.83px;font-size:9.3px;line-height:9.3px;color:#222;font-weight:700;-webkit-text-stroke:0.108px #222;">Dashboard</div>
<div class="t" style="left:0.00px;top:73.72px;font-size:7.07px;line-height:7.07px;color:#444;font-weight:400;-webkit-text-stroke:0.12px #444;">1. Portfolio Performance Metrics</div>
<div class="t" style="left:5.90px;top:95.87px;font-size:8.3px;line-height:8.3px;color:#333;font-weight:400;-webkit-text-stroke:0.18px #333;">Report Viewer</div>
<div class="t" style="left:22.30px;top:122.59px;font-size:7.1px;line-height:7.1px;color:#333;font-weight:700;-webkit-text-stroke:0.072px #333;">1 Portfolio Performance with Health</div>
<div class="t" style="left:1045.20px;top:122.56px;font-size:6.9px;line-height:6.9px;color:#222;font-weight:400;-webkit-text-stroke:0.12px #222;">Reload</div>
<div class="t" style="left:1092.00px;top:122.07px;font-size:7px;line-height:7px;color:#222;font-weight:400;-webkit-text-stroke:0.12px #222;">View In</div>
<div class="t" style="left:-161.05px;width:600px;text-align:center;top:144.92px;font-size:8.25px;line-height:8.25px;color:#fff;font-weight:700;-webkit-text-stroke:0.108px #fff;">Total Active Workspaces</div>
<div class="t" style="left:-161.05px;width:600px;text-align:center;top:157.93px;font-size:8px;line-height:8px;color:#111;font-weight:700;-webkit-text-stroke:0.108px #111;">9</div>
<div class="t" style="left:88.80px;width:600px;text-align:center;top:144.92px;font-size:8.25px;line-height:8.25px;color:#fff;font-weight:700;-webkit-text-stroke:0.108px #fff;">On Time Compliance</div>
<div class="t" style="left:88.80px;width:600px;text-align:center;top:157.93px;font-size:8px;line-height:8px;color:#111;font-weight:700;-webkit-text-stroke:0.108px #111;">56%</div>
<div class="t" style="left:323.40px;width:600px;text-align:center;top:144.92px;font-size:8.25px;line-height:8.25px;color:#fff;font-weight:700;-webkit-text-stroke:0.108px #fff;">On Plan Compliance</div>
<div class="t" style="left:323.40px;width:600px;text-align:center;top:157.93px;font-size:8px;line-height:8px;color:#111;font-weight:700;-webkit-text-stroke:0.108px #111;">44%</div>
<div class="t" style="left:523.70px;width:600px;text-align:center;top:144.92px;font-size:8.25px;line-height:8.25px;color:#fff;font-weight:700;-webkit-text-stroke:0.108px #fff;">Total Budget</div>
<div class="t" style="left:523.70px;width:600px;text-align:center;top:157.93px;font-size:8px;line-height:8px;color:#111;font-weight:700;-webkit-text-stroke:0.108px #111;">$3,080,500.00</div>
<div class="t" style="left:720.00px;width:600px;text-align:center;top:144.92px;font-size:8.25px;line-height:8.25px;color:#fff;font-weight:700;-webkit-text-stroke:0.108px #fff;">Total Spend to Date</div>
<div class="t" style="left:720.00px;width:600px;text-align:center;top:157.93px;font-size:8px;line-height:8px;color:#111;font-weight:700;-webkit-text-stroke:0.108px #111;">$1,680,625.00</div>
<div class="t" style="left:-105.50px;width:600px;text-align:center;top:176.04px;font-size:8.7px;line-height:8.7px;color:#111;font-weight:700;-webkit-text-stroke:0.108px #111;">Projects by Health</div>
<div class="t" style="left:286.60px;top:191.44px;font-size:6.1px;line-height:6.1px;color:#222;font-weight:400;-webkit-text-stroke:0.06px #222;">Red</div>
<div class="t" style="left:286.60px;top:197.79px;font-size:6.1px;line-height:6.1px;color:#222;font-weight:400;-webkit-text-stroke:0.06px #222;">2</div>
<div class="t" style="left:286.60px;top:204.14px;font-size:6.1px;line-height:6.1px;color:#222;font-weight:400;-webkit-text-stroke:0.06px #222;">22%</div>
<div class="t" style="left:96.50px;top:263.74px;font-size:6.1px;line-height:6.1px;color:#222;font-weight:400;-webkit-text-stroke:0.06px #222;">Green</div>
<div class="t" style="left:96.50px;top:270.09px;font-size:6.1px;line-height:6.1px;color:#222;font-weight:400;-webkit-text-stroke:0.06px #222;">4</div>
<div class="t" style="left:96.50px;top:276.44px;font-size:6.1px;line-height:6.1px;color:#222;font-weight:400;-webkit-text-stroke:0.06px #222;">44%</div>
<div class="t" style="left:286.70px;top:373.34px;font-size:6.1px;line-height:6.1px;color:#222;font-weight:400;-webkit-text-stroke:0.06px #222;">Yellow</div>
<div class="t" style="left:286.70px;top:379.69px;font-size:6.1px;line-height:6.1px;color:#222;font-weight:400;-webkit-text-stroke:0.06px #222;">3</div>
<div class="t" style="left:286.70px;top:386.04px;font-size:6.1px;line-height:6.1px;color:#222;font-weight:400;-webkit-text-stroke:0.06px #222;">33%</div>
<div class="t" style="left:269.75px;width:600px;text-align:center;top:176.04px;font-size:8.7px;line-height:8.7px;color:#111;font-weight:700;-webkit-text-stroke:0.108px #111;">Number of Projects</div>
<div class="t" style="left:174.70px;width:600px;text-align:center;top:279.27px;font-size:6px;line-height:6px;color:#111;font-weight:400;-webkit-text-stroke:0.06px #111;">3</div>
<div class="t" style="left:174.70px;width:600px;text-align:center;top:376.22px;font-size:6px;line-height:6px;color:#222;font-weight:400;-webkit-text-stroke:0.06px #222;">Finance</div>
<div class="t" style="left:228.00px;width:600px;text-align:center;top:308.25px;font-size:6px;line-height:6px;color:#111;font-weight:400;-webkit-text-stroke:0.06px #111;">2</div>
<div class="t" style="left:228.00px;width:600px;text-align:center;top:376.22px;font-size:6px;line-height:6px;color:#222;font-weight:400;-webkit-text-stroke:0.06px #222;">HR</div>
<div class="t" style="left:281.30px;width:600px;text-align:center;top:337.24px;font-size:6px;line-height:6px;color:#111;font-weight:400;-webkit-text-stroke:0.06px #111;">1</div>
<div class="t" style="left:281.30px;width:600px;text-align:center;top:376.22px;font-size:6px;line-height:6px;color:#222;font-weight:400;-webkit-text-stroke:0.06px #222;">IT</div>
<div class="t" style="left:334.60px;width:600px;text-align:center;top:308.25px;font-size:6px;line-height:6px;color:#111;font-weight:400;-webkit-text-stroke:0.06px #111;">2</div>
<div class="t" style="left:334.60px;width:600px;text-align:center;top:376.22px;font-size:6px;line-height:6px;color:#222;font-weight:400;-webkit-text-stroke:0.06px #222;">Marketing</div>
<div class="t" style="left:387.90px;width:600px;text-align:center;top:337.24px;font-size:6px;line-height:6px;color:#111;font-weight:400;-webkit-text-stroke:0.06px #111;">1</div>
<div class="t" style="left:387.90px;width:600px;text-align:center;top:376.22px;font-size:6px;line-height:6px;color:#222;font-weight:400;-webkit-text-stroke:0.06px #222;">Operations</div>
<div class="t" style="left:-158.40px;width:600px;text-align:right;top:366.22px;font-size:6px;line-height:6px;color:#222;font-weight:400;-webkit-text-stroke:0.06px #222;">0</div>
<div class="t" style="left:-158.40px;width:600px;text-align:right;top:337.24px;font-size:6px;line-height:6px;color:#222;font-weight:400;-webkit-text-stroke:0.06px #222;">0.5</div>
<div class="t" style="left:-158.40px;width:600px;text-align:right;top:308.25px;font-size:6px;line-height:6px;color:#222;font-weight:400;-webkit-text-stroke:0.06px #222;">1</div>
<div class="t" style="left:-158.40px;width:600px;text-align:right;top:279.27px;font-size:6px;line-height:6px;color:#222;font-weight:400;-webkit-text-stroke:0.06px #222;">1.5</div>
<div class="t" style="left:-158.40px;width:600px;text-align:right;top:250.29px;font-size:6px;line-height:6px;color:#222;font-weight:400;-webkit-text-stroke:0.06px #222;">2</div>
<div class="t" style="left:-158.40px;width:600px;text-align:right;top:221.30px;font-size:6px;line-height:6px;color:#222;font-weight:400;-webkit-text-stroke:0.06px #222;">2.5</div>
<div class="t" style="left:-158.40px;width:600px;text-align:right;top:192.32px;font-size:6px;line-height:6px;color:#222;font-weight:400;-webkit-text-stroke:0.06px #222;">3</div>
<div class="t" style="left:281.40px;width:600px;text-align:center;top:386.22px;font-size:6px;line-height:6px;color:#111;font-weight:700;-webkit-text-stroke:0.036px #111;">Group</div>
<div class="t" style="left:388px;top:277.7px;width:80px;text-align:center;font-size:6.4px;line-height:7px;font-weight:700;color:#111;transform:rotate(-90deg);">Project Count</div>
<div class="t" style="left:645.20px;width:600px;text-align:center;top:176.04px;font-size:8.7px;line-height:8.7px;color:#111;font-weight:700;-webkit-text-stroke:0.108px #111;">Allocated Resources</div>
<div class="t" style="left:555.85px;width:600px;text-align:center;top:386.02px;font-size:6px;line-height:6px;color:#222;font-weight:400;-webkit-text-stroke:0.06px #222;">Finance</div>
<div class="t" style="left:592.85px;width:600px;text-align:center;top:386.02px;font-size:6px;line-height:6px;color:#222;font-weight:400;-webkit-text-stroke:0.06px #222;">HR</div>
<div class="t" style="left:629.95px;width:600px;text-align:center;top:386.02px;font-size:6px;line-height:6px;color:#222;font-weight:400;-webkit-text-stroke:0.06px #222;">IT</div>
<div class="t" style="left:667.05px;width:600px;text-align:center;top:386.02px;font-size:6px;line-height:6px;color:#222;font-weight:400;-webkit-text-stroke:0.06px #222;">Marketing</div>
<div class="t" style="left:703.45px;width:600px;text-align:center;top:386.02px;font-size:6px;line-height:6px;color:#222;font-weight:400;-webkit-text-stroke:0.06px #222;">Operations</div>
<div class="t" style="left:231.70px;width:600px;text-align:right;top:377.12px;font-size:6px;line-height:6px;color:#222;font-weight:400;-webkit-text-stroke:0.06px #222;">0.00</div>
<div class="t" style="left:231.70px;width:600px;text-align:right;top:340.00px;font-size:6px;line-height:6px;color:#222;font-weight:400;-webkit-text-stroke:0.06px #222;">1,000.00</div>
<div class="t" style="left:231.70px;width:600px;text-align:right;top:302.88px;font-size:6px;line-height:6px;color:#222;font-weight:400;-webkit-text-stroke:0.06px #222;">2,000.00</div>
<div class="t" style="left:231.70px;width:600px;text-align:right;top:265.76px;font-size:6px;line-height:6px;color:#222;font-weight:400;-webkit-text-stroke:0.06px #222;">3,000.00</div>
<div class="t" style="left:231.70px;width:600px;text-align:right;top:228.64px;font-size:6px;line-height:6px;color:#222;font-weight:400;-webkit-text-stroke:0.06px #222;">4,000.00</div>
<div class="t" style="left:231.70px;width:600px;text-align:right;top:191.52px;font-size:6px;line-height:6px;color:#222;font-weight:400;-webkit-text-stroke:0.06px #222;">5,000.00</div>
<div class="t" style="left:773.8px;top:282.9px;width:60px;text-align:center;font-size:5.8px;line-height:7px;font-weight:700;color:#111;transform:rotate(-90deg);">Hours</div>
<div class="t" style="left:1025.00px;top:253.17px;font-size:7px;line-height:7px;color:#111;font-weight:700;-webkit-text-stroke:0.072px #111;">Member Type Name</div>
<div class="t" style="left:1035.10px;top:262.30px;font-size:6.5px;line-height:6.5px;color:#222;font-weight:400;-webkit-text-stroke:0.06px #222;">Analyst</div>
<div class="t" style="left:1035.10px;top:271.25px;font-size:6.5px;line-height:6.5px;color:#222;font-weight:400;-webkit-text-stroke:0.06px #222;">Contractors</div>
<div class="t" style="left:1035.10px;top:280.20px;font-size:6.5px;line-height:6.5px;color:#222;font-weight:400;-webkit-text-stroke:0.06px #222;">DBA</div>
<div class="t" style="left:1035.10px;top:289.15px;font-size:6.5px;line-height:6.5px;color:#222;font-weight:400;-webkit-text-stroke:0.06px #222;">Developer</div>
<div class="t" style="left:1035.10px;top:298.10px;font-size:6.5px;line-height:6.5px;color:#222;font-weight:400;-webkit-text-stroke:0.06px #222;">Engineer</div>
<div class="t" style="left:1035.10px;top:307.05px;font-size:6.5px;line-height:6.5px;color:#222;font-weight:400;-webkit-text-stroke:0.06px #222;">Finance</div>
<div class="t" style="left:1035.10px;top:316.00px;font-size:6.5px;line-height:6.5px;color:#222;font-weight:400;-webkit-text-stroke:0.06px #222;">PM</div>
<div class="t" style="left:1035.10px;top:324.95px;font-size:6.5px;line-height:6.5px;color:#222;font-weight:400;-webkit-text-stroke:0.06px #222;">Sue Ko</div>
<div class="t" style="left:25.80px;top:418.22px;font-size:7.3px;line-height:7.3px;color:#111;font-weight:400;-webkit-text-stroke:0.12px #111;">Business Unit</div>
<div class="t" style="left:-40.90px;width:600px;text-align:center;top:419.02px;font-size:7.3px;line-height:7.3px;color:#333;font-weight:400;-webkit-text-stroke:0.12px #333;">Project Name</div>
<div class="t" style="left:70.00px;width:600px;text-align:center;top:419.02px;font-size:7.3px;line-height:7.3px;color:#333;font-weight:400;-webkit-text-stroke:0.12px #333;">Health</div>
<div class="t" style="left:141.30px;width:600px;text-align:center;top:419.02px;font-size:7.3px;line-height:7.3px;color:#333;font-weight:400;-webkit-text-stroke:0.12px #333;">% Complete</div>
<div class="t" style="left:230.00px;width:600px;text-align:center;top:419.02px;font-size:7.3px;line-height:7.3px;color:#333;font-weight:400;-webkit-text-stroke:0.12px #333;">Planned Finish</div>
<div class="t" style="left:318.20px;width:600px;text-align:center;top:419.02px;font-size:7.3px;line-height:7.3px;color:#333;font-weight:400;-webkit-text-stroke:0.12px #333;">Scheduled Finish</div>
<div class="t" style="left:389.70px;width:600px;text-align:center;top:419.02px;font-size:7.3px;line-height:7.3px;color:#333;font-weight:400;-webkit-text-stroke:0.12px #333;">Variance</div>
<div class="t" style="left:461.00px;width:600px;text-align:center;top:419.02px;font-size:7.3px;line-height:7.3px;color:#333;font-weight:400;-webkit-text-stroke:0.12px #333;">Phase</div>
<div class="t" style="left:549.00px;width:600px;text-align:center;top:419.02px;font-size:7.3px;line-height:7.3px;color:#333;font-weight:400;-webkit-text-stroke:0.12px #333;">Status Updated</div>
<div class="t" style="left:12.90px;top:445.48px;font-size:6.4px;line-height:6.4px;color:#222;font-weight:400;-webkit-text-stroke:0.06px #222;">Finance</div>
<div class="t" style="left:179.20px;top:448.12px;font-size:6.36px;line-height:6.36px;color:#1b1bd0;font-weight:400;-webkit-text-stroke:0.06px #1b1bd0;text-decoration:underline;text-decoration-thickness:0.7px;text-underline-offset:0.6px;text-decoration-skip-ink:none;">Business Relationship Initiative</div>
<div class="t" style="left:70.50px;width:600px;text-align:center;top:447.74px;font-size:6.1px;line-height:6.1px;color:#2233dd;font-weight:400;-webkit-text-stroke:0.06px #2233dd;">Green</div>
<div class="t" style="left:141.40px;width:600px;text-align:center;top:448.12px;font-size:6.36px;line-height:6.36px;color:#222;font-weight:400;-webkit-text-stroke:0.06px #222;">83%</div>
<div class="t" style="left:229.80px;width:600px;text-align:center;top:448.12px;font-size:6.36px;line-height:6.36px;color:#222;font-weight:400;-webkit-text-stroke:0.06px #222;">08/26/16</div>
<div class="t" style="left:317.80px;width:600px;text-align:center;top:448.12px;font-size:6.36px;line-height:6.36px;color:#222;font-weight:400;-webkit-text-stroke:0.06px #222;">07/18/16</div>
<div class="t" style="left:390.00px;width:600px;text-align:center;top:447.47px;font-size:6.3px;line-height:6.3px;color:#fff;font-weight:700;-webkit-text-stroke:0.036px #fff;">29</div>
<div class="t" style="left:461.00px;width:600px;text-align:center;top:448.12px;font-size:6.36px;line-height:6.36px;color:#222;font-weight:400;-webkit-text-stroke:0.06px #222;">Definition</div>
<div class="t" style="left:549.40px;width:600px;text-align:center;top:448.12px;font-size:6.36px;line-height:6.36px;color:#222;font-weight:400;-webkit-text-stroke:0.06px #222;">May 20, 2016</div>
<div class="t" style="left:179.20px;top:463.25px;font-size:6.36px;line-height:6.36px;color:#1b1bd0;font-weight:400;-webkit-text-stroke:0.06px #1b1bd0;text-decoration:underline;text-decoration-thickness:0.7px;text-underline-offset:0.6px;text-decoration-skip-ink:none;">Bigfish Migration</div>
<div class="t" style="left:70.50px;width:600px;text-align:center;top:462.87px;font-size:6.1px;line-height:6.1px;color:#2233dd;font-weight:400;-webkit-text-stroke:0.06px #2233dd;">Yellow</div>
<div class="t" style="left:141.40px;width:600px;text-align:center;top:463.25px;font-size:6.36px;line-height:6.36px;color:#222;font-weight:400;-webkit-text-stroke:0.06px #222;">69%</div>
<div class="t" style="left:229.80px;width:600px;text-align:center;top:463.25px;font-size:6.36px;line-height:6.36px;color:#222;font-weight:400;-webkit-text-stroke:0.06px #222;">11/29/16</div>
<div class="t" style="left:317.80px;width:600px;text-align:center;top:463.25px;font-size:6.36px;line-height:6.36px;color:#222;font-weight:400;-webkit-text-stroke:0.06px #222;">12/19/16</div>
<div class="t" style="left:390.00px;width:600px;text-align:center;top:462.60px;font-size:6.3px;line-height:6.3px;color:#fff;font-weight:700;-webkit-text-stroke:0.036px #fff;">-14</div>
<div class="t" style="left:461.00px;width:600px;text-align:center;top:463.25px;font-size:6.36px;line-height:6.36px;color:#222;font-weight:400;-webkit-text-stroke:0.06px #222;">Planning</div>
<div class="t" style="left:549.40px;width:600px;text-align:center;top:463.25px;font-size:6.36px;line-height:6.36px;color:#222;font-weight:400;-webkit-text-stroke:0.06px #222;">May 20, 2016</div>
<div class="t" style="left:179.20px;top:478.38px;font-size:6.36px;line-height:6.36px;color:#1b1bd0;font-weight:400;-webkit-text-stroke:0.06px #1b1bd0;text-decoration:underline;text-decoration-thickness:0.7px;text-underline-offset:0.6px;text-decoration-skip-ink:none;">Vendor Management</div>
<div class="t" style="left:70.50px;width:600px;text-align:center;top:478.00px;font-size:6.1px;line-height:6.1px;color:#2233dd;font-weight:400;-webkit-text-stroke:0.06px #2233dd;">Green</div>
<div class="t" style="left:141.40px;width:600px;text-align:center;top:478.38px;font-size:6.36px;line-height:6.36px;color:#222;font-weight:400;-webkit-text-stroke:0.06px #222;">0%</div>
<div class="t" style="left:229.80px;width:600px;text-align:center;top:478.38px;font-size:6.36px;line-height:6.36px;color:#222;font-weight:400;-webkit-text-stroke:0.06px #222;">02/09/17</div>
<div class="t" style="left:317.80px;width:600px;text-align:center;top:478.38px;font-size:6.36px;line-height:6.36px;color:#222;font-weight:400;-webkit-text-stroke:0.06px #222;">12/08/16</div>
<div class="t" style="left:390.00px;width:600px;text-align:center;top:477.73px;font-size:6.3px;line-height:6.3px;color:#fff;font-weight:700;-webkit-text-stroke:0.036px #fff;">45</div>
<div class="t" style="left:461.00px;width:600px;text-align:center;top:478.38px;font-size:6.36px;line-height:6.36px;color:#222;font-weight:400;-webkit-text-stroke:0.06px #222;">Definition</div>
<div class="t" style="left:549.40px;width:600px;text-align:center;top:478.38px;font-size:6.36px;line-height:6.36px;color:#222;font-weight:400;-webkit-text-stroke:0.06px #222;">May 20, 2016</div>
<div class="t" style="left:12.90px;top:490.87px;font-size:6.4px;line-height:6.4px;color:#222;font-weight:400;-webkit-text-stroke:0.06px #222;">HR</div>
<div class="t" style="left:179.20px;top:493.51px;font-size:6.36px;line-height:6.36px;color:#1b1bd0;font-weight:400;-webkit-text-stroke:0.06px #1b1bd0;text-decoration:underline;text-decoration-thickness:0.7px;text-underline-offset:0.6px;text-decoration-skip-ink:none;">Agile: WBS Inline Edit</div>
<div class="t" style="left:70.50px;width:600px;text-align:center;top:493.13px;font-size:6.1px;line-height:6.1px;color:#2233dd;font-weight:400;-webkit-text-stroke:0.06px #2233dd;">Yellow</div>
<div class="t" style="left:141.40px;width:600px;text-align:center;top:493.51px;font-size:6.36px;line-height:6.36px;color:#222;font-weight:400;-webkit-text-stroke:0.06px #222;">24%</div>
<div class="t" style="left:229.80px;width:600px;text-align:center;top:493.51px;font-size:6.36px;line-height:6.36px;color:#222;font-weight:400;-webkit-text-stroke:0.06px #222;">05/01/16</div>
<div class="t" style="left:317.80px;width:600px;text-align:center;top:493.51px;font-size:6.36px;line-height:6.36px;color:#222;font-weight:400;-webkit-text-stroke:0.06px #222;">05/25/16</div>
<div class="t" style="left:390.00px;width:600px;text-align:center;top:492.86px;font-size:6.3px;line-height:6.3px;color:#fff;font-weight:700;-webkit-text-stroke:0.036px #fff;">-18</div>
<div class="t" style="left:461.00px;width:600px;text-align:center;top:493.51px;font-size:6.36px;line-height:6.36px;color:#222;font-weight:400;-webkit-text-stroke:0.06px #222;">Release Planning</div>
<div class="t" style="left:549.40px;width:600px;text-align:center;top:493.51px;font-size:6.36px;line-height:6.36px;color:#222;font-weight:400;-webkit-text-stroke:0.06px #222;">May 20, 2016</div>
<div class="t" style="left:179.20px;top:508.64px;font-size:6.36px;line-height:6.36px;color:#1b1bd0;font-weight:400;-webkit-text-stroke:0.06px #1b1bd0;text-decoration:underline;text-decoration-thickness:0.7px;text-underline-offset:0.6px;text-decoration-skip-ink:none;">Agile: UX Mobile Timesheets</div>
<div class="t" style="left:70.50px;width:600px;text-align:center;top:508.26px;font-size:6.1px;line-height:6.1px;color:#2233dd;font-weight:400;-webkit-text-stroke:0.06px #2233dd;">Green</div>
<div class="t" style="left:141.40px;width:600px;text-align:center;top:508.64px;font-size:6.36px;line-height:6.36px;color:#222;font-weight:400;-webkit-text-stroke:0.06px #222;">31%</div>
<div class="t" style="left:229.80px;width:600px;text-align:center;top:508.64px;font-size:6.36px;line-height:6.36px;color:#222;font-weight:400;-webkit-text-stroke:0.06px #222;">09/29/16</div>
<div class="t" style="left:317.80px;width:600px;text-align:center;top:508.64px;font-size:6.36px;line-height:6.36px;color:#222;font-weight:400;-webkit-text-stroke:0.06px #222;">07/15/16</div>
<div class="t" style="left:390.00px;width:600px;text-align:center;top:507.99px;font-size:6.3px;line-height:6.3px;color:#fff;font-weight:700;-webkit-text-stroke:0.036px #fff;">54</div>
<div class="t" style="left:461.00px;width:600px;text-align:center;top:508.64px;font-size:6.36px;line-height:6.36px;color:#222;font-weight:400;-webkit-text-stroke:0.06px #222;">Release Planning</div>
<div class="t" style="left:549.40px;width:600px;text-align:center;top:508.64px;font-size:6.36px;line-height:6.36px;color:#222;font-weight:400;-webkit-text-stroke:0.06px #222;">May 20, 2016</div>
<div class="t" style="left:12.90px;top:521.13px;font-size:6.4px;line-height:6.4px;color:#222;font-weight:400;-webkit-text-stroke:0.06px #222;">IT</div>
<div class="t" style="left:179.20px;top:523.77px;font-size:6.36px;line-height:6.36px;color:#1b1bd0;font-weight:400;-webkit-text-stroke:0.06px #1b1bd0;text-decoration:underline;text-decoration-thickness:0.7px;text-underline-offset:0.6px;text-decoration-skip-ink:none;">Content Management System</div>
<div class="t" style="left:70.50px;width:600px;text-align:center;top:523.39px;font-size:6.1px;line-height:6.1px;color:#2233dd;font-weight:400;-webkit-text-stroke:0.06px #2233dd;">Red</div>
<div class="t" style="left:141.40px;width:600px;text-align:center;top:523.77px;font-size:6.36px;line-height:6.36px;color:#222;font-weight:400;-webkit-text-stroke:0.06px #222;">19%</div>
<div class="t" style="left:229.80px;width:600px;text-align:center;top:523.77px;font-size:6.36px;line-height:6.36px;color:#222;font-weight:400;-webkit-text-stroke:0.06px #222;">09/15/16</div>
<div class="t" style="left:317.80px;width:600px;text-align:center;top:523.77px;font-size:6.36px;line-height:6.36px;color:#222;font-weight:400;-webkit-text-stroke:0.06px #222;">12/27/16</div>
<div class="t" style="left:390.00px;width:600px;text-align:center;top:523.12px;font-size:6.3px;line-height:6.3px;color:#fff;font-weight:700;-webkit-text-stroke:0.036px #fff;">-73</div>
<div class="t" style="left:461.00px;width:600px;text-align:center;top:523.77px;font-size:6.36px;line-height:6.36px;color:#222;font-weight:400;-webkit-text-stroke:0.06px #222;">Planning</div>
<div class="t" style="left:549.40px;width:600px;text-align:center;top:523.77px;font-size:6.36px;line-height:6.36px;color:#222;font-weight:400;-webkit-text-stroke:0.06px #222;">May 5, 2016</div>
<div class="t" style="left:12.90px;top:536.26px;font-size:6.4px;line-height:6.4px;color:#222;font-weight:400;-webkit-text-stroke:0.06px #222;">Marketing</div>
<div class="t" style="left:179.20px;top:538.90px;font-size:6.36px;line-height:6.36px;color:#1b1bd0;font-weight:400;-webkit-text-stroke:0.06px #1b1bd0;text-decoration:underline;text-decoration-thickness:0.7px;text-underline-offset:0.6px;text-decoration-skip-ink:none;">Custom Fusion Interface</div>
<div class="t" style="left:70.50px;width:600px;text-align:center;top:538.52px;font-size:6.1px;line-height:6.1px;color:#2233dd;font-weight:400;-webkit-text-stroke:0.06px #2233dd;">Yellow</div>
<div class="t" style="left:141.40px;width:600px;text-align:center;top:538.90px;font-size:6.36px;line-height:6.36px;color:#222;font-weight:400;-webkit-text-stroke:0.06px #222;">69%</div>
<div class="t" style="left:229.80px;width:600px;text-align:center;top:538.90px;font-size:6.36px;line-height:6.36px;color:#222;font-weight:400;-webkit-text-stroke:0.06px #222;">09/20/16</div>
<div class="t" style="left:317.80px;width:600px;text-align:center;top:538.90px;font-size:6.36px;line-height:6.36px;color:#222;font-weight:400;-webkit-text-stroke:0.06px #222;">09/26/16</div>
<div class="t" style="left:390.00px;width:600px;text-align:center;top:538.25px;font-size:6.3px;line-height:6.3px;color:#222;font-weight:700;-webkit-text-stroke:0.036px #222;">-4</div>
<div class="t" style="left:461.00px;width:600px;text-align:center;top:538.90px;font-size:6.36px;line-height:6.36px;color:#222;font-weight:400;-webkit-text-stroke:0.06px #222;">Design</div>
<div class="t" style="left:549.40px;width:600px;text-align:center;top:538.90px;font-size:6.36px;line-height:6.36px;color:#222;font-weight:400;-webkit-text-stroke:0.06px #222;">May 20, 2016</div>
</body></html>
